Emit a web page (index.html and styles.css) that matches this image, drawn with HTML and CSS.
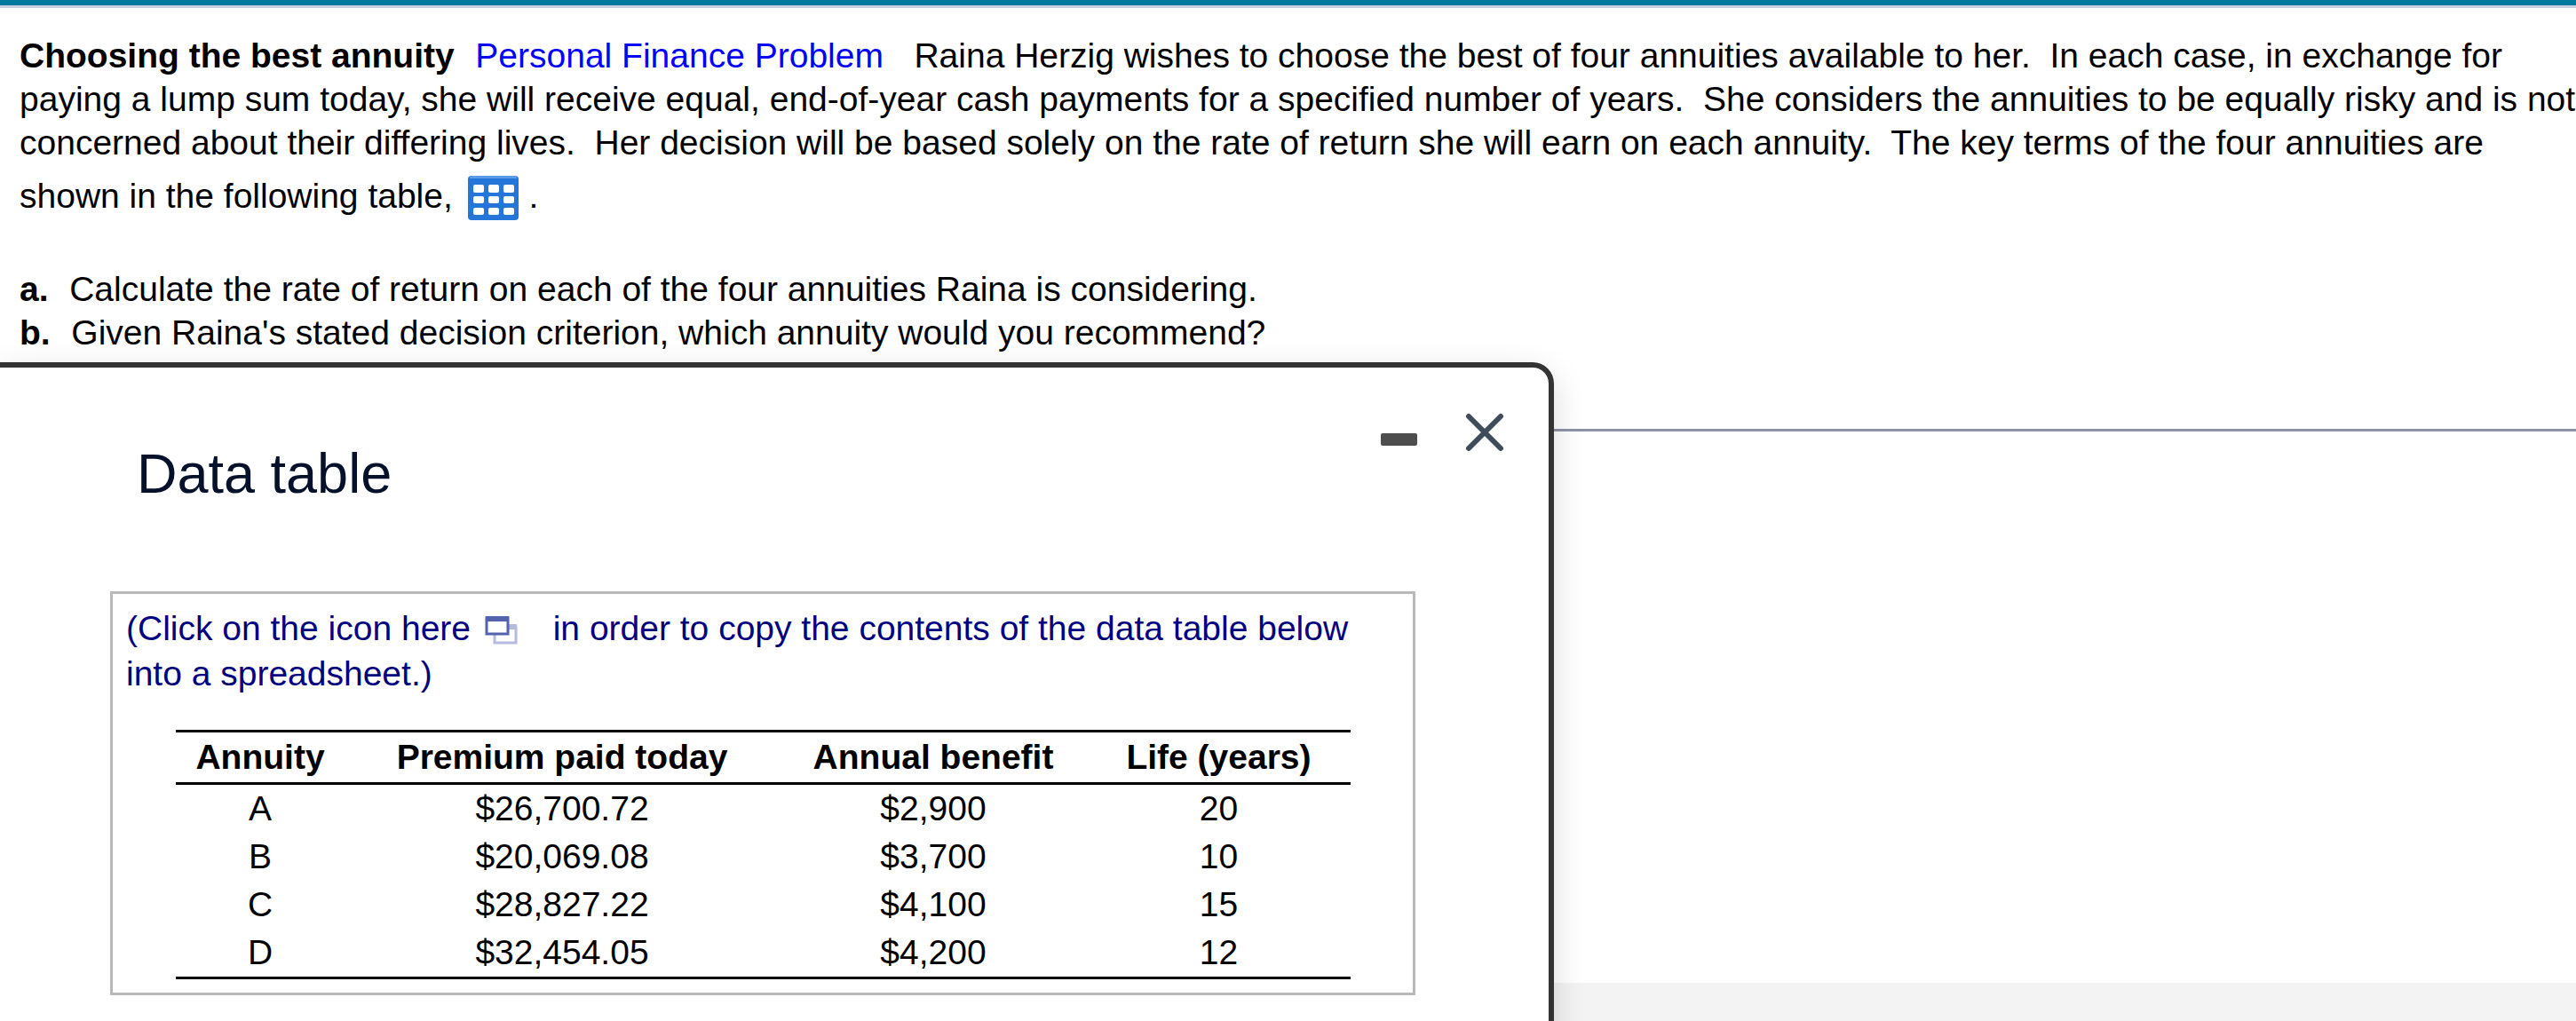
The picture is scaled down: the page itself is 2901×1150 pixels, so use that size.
FILE: index.html
```html
<!DOCTYPE html>
<html lang="en">
<head>
    <meta charset="UTF-8">
    <meta name="viewport" content="width=device-width, initial-scale=1.0">
    <title>Choosing the best annuity</title>
    <link rel="stylesheet" href="styles.css">
</head>
<body>

<main class="question">
    <p class="problem">
        <b>Choosing the best annuity</b>&nbsp; <span class="tag">Personal Finance Problem</span>&nbsp;&nbsp; Raina Herzig wishes to choose the best of four annuities available to her.&nbsp; In each case, in exchange for paying a lump sum today, she will receive equal, end-of-year cash payments for a specified number of years.&nbsp; She considers the annuities to be equally risky and is not concerned about their differing lives.&nbsp; Her decision will be based solely on the rate of return she will earn on each annuity.&nbsp; The key terms of the four annuities are shown in the following table,
        <button class="table-button" aria-label="Open data table">
            <svg viewBox="0 0 57 51" width="57" height="51">
                <rect width="57" height="50" rx="4" fill="#2477d8"/>
                <rect x="2" width="53" height="3" fill="#5a9ae6"/>
                <g fill="#fff">
                    <rect x="6" y="10" width="12" height="9" rx="2"/>
                    <rect x="23" y="10" width="12" height="9" rx="2"/>
                    <rect x="40" y="10" width="12" height="9" rx="2"/>
                    <rect x="6" y="23" width="12" height="8" rx="2"/>
                    <rect x="23" y="23" width="12" height="8" rx="2"/>
                    <rect x="40" y="23" width="12" height="8" rx="2"/>
                    <rect x="6" y="36" width="12" height="8" rx="2"/>
                    <rect x="23" y="36" width="12" height="8" rx="2"/>
                    <rect x="40" y="36" width="12" height="8" rx="2"/>
                </g>
            </svg>
        </button>
        .
    </p>
    <p class="part"><b>a.</b>&nbsp; Calculate the rate of return on each of the four annuities Raina is considering.</p>
    <p class="part"><b>b.</b>&nbsp; Given Raina's stated decision criterion, which annuity would you recommend?</p>
    <hr class="divider">
</main>
<footer class="footer"></footer>

<!-- Data table popup -->
<section class="dialog" role="dialog" aria-labelledby="dialogTitle">
    <header class="dialog-header">
        <h2 id="dialogTitle">Data table</h2>
        <div class="dialog-controls">
            <button class="icon-button" aria-label="Minimize">
                <svg viewBox="0 0 44 44" width="44" height="44">
                    <rect x="1" y="23" width="41" height="14" rx="2" fill="#4d4d4d"/>
                </svg>
            </button>
            <button class="icon-button" aria-label="Close">
                <svg viewBox="0 0 44 44" width="44" height="44">
                    <path d="M4 4L40 40M40 4L4 40" stroke="#3f4d5a" stroke-width="6" stroke-linecap="round"/>
                </svg>
            </button>
        </div>
    </header>

    <div class="data-box">
        <p class="copy-note">
            (Click on the icon here
            <button class="copy-button" aria-label="Copy table to spreadsheet">
                <svg viewBox="0 0 38 34" width="38" height="34">
                    <path d="M11 13H35V31H11Z" fill="#fff" stroke="#b5bbdf" stroke-width="3"/>
                    <path d="M27 10H36V16H27Z" fill="#b5bbdf"/>
                    <path d="M2 3H26V21H2Z" fill="#fff" stroke="#5563ae" stroke-width="3"/>
                    <path d="M1 1H27V7H1Z" fill="#5563ae"/>
                </svg>
            </button>
            in order to copy the contents of the data table below into a spreadsheet.)
        </p>
        <table class="annuities">
            <thead>
                <tr>
                    <th scope="col" class="col-annuity">Annuity</th>
                    <th scope="col" class="col-premium">Premium paid today</th>
                    <th scope="col" class="col-benefit">Annual benefit</th>
                    <th scope="col">Life (years)</th>
                </tr>
            </thead>
            <tbody>
                <tr><td>A</td><td>$26,700.72</td><td>$2,900</td><td>20</td></tr>
                <tr><td>B</td><td>$20,069.08</td><td>$3,700</td><td>10</td></tr>
                <tr><td>C</td><td>$28,827.22</td><td>$4,100</td><td>15</td></tr>
                <tr><td>D</td><td>$32,454.05</td><td>$4,200</td><td>12</td></tr>
            </tbody>
        </table>
    </div>
</section>

</body>
</html>
```
FILE: styles.css
```css
* {
    box-sizing: border-box;
}
body {
    display: flex;
    flex-direction: column;
    min-height: 100vh;
    margin: 0;
    overflow: hidden;
    font-family: 'Liberation Sans', Arial, sans-serif;
    font-size: 39px;
    line-height: 49px;
    color: #000;
    background: #fff;
}
p {
    margin: 0;
}
button {
    padding: 0;
    border: none;
    background: none;
    cursor: pointer;
}
svg {
    display: block;
}
.question {
    flex: 1;
    padding: 32px 0 0 22px;
    border-top: 6px solid #00799c;
    box-shadow: inset 0 3px #c9cee0;
}
.question b {
    margin-right: 2px;
}
.problem {
    margin-bottom: 52px;
}
.tag {
    margin-right: 2px;
    color: #0000ff;
}
.table-button {
    margin: 13px 1px 0 6px;
    vertical-align: -15px;
}
.divider {
    height: 3px;
    margin: 84px 0 0;
    border: none;
    background: #8e93a8;
}
.footer {
    height: 43px;
    background: #f3f3f3;
}
.dialog {
    position: absolute;
    top: 408px;
    left: 0;
    width: 1750px;
    max-width: 100%;
    padding: 51px 150px 60px 124px;
    border: 6px solid #333;
    border-left: none;
    border-bottom: none;
    border-top-right-radius: 24px;
    background: #fff;
    box-shadow: 0 12px 36px rgba(0, 0, 0, 0.15);
}
.dialog-header {
    display: flex;
    justify-content: space-between;
    margin: 0 -100px 93px 30px;
}
.dialog-header h2 {
    margin: 28px 0 0;
    font-size: 63px;
    font-weight: 400;
    line-height: 80px;
    color: #05112a;
}
.dialog-controls {
    display: flex;
    align-items: flex-start;
    gap: 52px;
}
.data-box {
    padding: 13px 50px 15px 15px;
    border: 3px solid #b9b9b9;
}
.copy-note {
    line-height: 51px;
    color: #000080;
}
.copy-button {
    margin: 0 28px 0 5px;
    vertical-align: -6px;
}
.annuities {
    width: calc(100% - 76px);
    margin: 38px 0 0 56px;
    border-collapse: collapse;
    border-bottom: 3px solid #000;
    text-align: center;
}
.annuities th {
    padding: 3px 0 4px;
    border-top: 3px solid #000;
    border-bottom: 3px solid #000;
}
.annuities td {
    padding: 2px 0 3px;
}
.annuities .col-annuity {
    width: 190px;
}
.annuities .col-premium {
    width: 490px;
}
.annuities .col-benefit {
    width: 346px;
}
```
